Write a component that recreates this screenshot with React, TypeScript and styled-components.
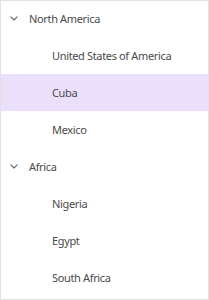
import React from 'react';
import styled, { createGlobalStyle } from 'styled-components';

const GlobalStyle = createGlobalStyle`
  html, body {
    margin: 0;
    padding: 0;
    background: #ffffff;
  }
`;

type Node = { label: string; children?: string[] };

const tree: Node[] = [
  { label: 'North America', children: ['United States of America', 'Cuba', 'Mexico'] },
  { label: 'Africa', children: ['Nigeria', 'Egypt', 'South Africa'] },
];

const selected = 'Cuba';

const Chevron = () => (
  <svg width="8" height="5" viewBox="0 0 8 5" fill="none">
    <path d="M0.8 0.8 L4 4 L7.2 0.8" stroke="#666666" strokeWidth="1.1" strokeLinecap="round" strokeLinejoin="round" />
  </svg>
);

const App = () => {
  return (
    <>
      <GlobalStyle />
      <Panel>
        {tree.map((group) => (
          <Group key={group.label}>
            <Row>
              <Toggle>
                <Chevron />
              </Toggle>
              <Label>{group.label}</Label>
            </Row>
            {group.children?.map((child) => (
              <Row key={child} $depth={1} $active={child === selected}>
                <Label>{child}</Label>
              </Row>
            ))}
          </Group>
        ))}
      </Panel>
    </>
  );
};

export default App;

const Panel = styled.div`
  box-sizing: border-box;
  width: 209px;
  height: 300px;
  border: 1px solid #e2e2e2;
  border-top: none;
  box-shadow: inset 0 1px 0 #e2e2e2;
  background: #ffffff;
  font-family: 'Noto Sans', 'Open Sans', sans-serif;
`;

const Group = styled.div`
  display: flex;
  flex-direction: column;
`;

const Row = styled.div<{ $depth?: number; $active?: boolean }>`
  display: flex;
  align-items: center;
  height: 37px;
  padding-left: ${(p) => (p.$depth ? '51px' : '9px')};
  background: ${(p) => (p.$active ? '#ebe0fc' : 'transparent')};
`;

const Toggle = styled.span`
  display: flex;
  align-items: center;
  justify-content: center;
  width: 8px;
  height: 8px;
  margin-right: 11px;
`;

const Label = styled.span`
  font-size: 11px;
  letter-spacing: -0.35px;
  color: #4a4a4a;
  white-space: nowrap;
`;
